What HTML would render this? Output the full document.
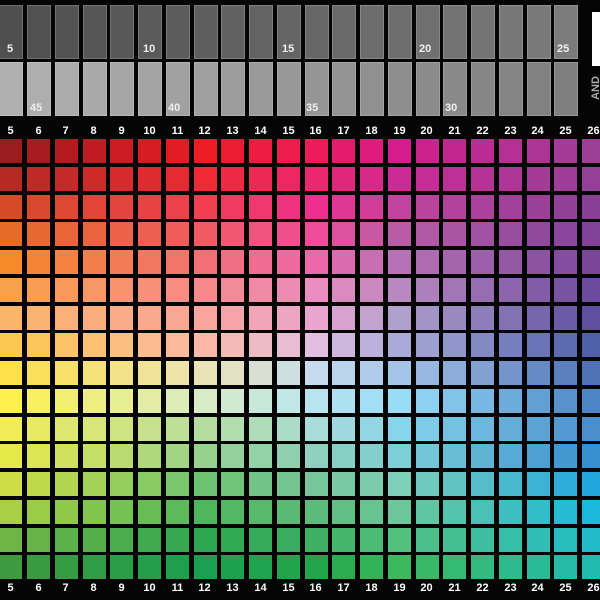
<!DOCTYPE html>
<html><head><meta charset="utf-8"><style>
body{margin:0;width:600px;height:600px;background:#050505;position:relative;overflow:hidden;font-family:"Liberation Sans",sans-serif}
.c{position:absolute;width:23px;height:24px}
.g{position:absolute;width:22px;height:52px;border:1px solid rgba(255,255,255,.18)}
.n{position:absolute;width:23px;text-align:center;color:#fff;font-weight:bold;font-size:11px;line-height:12px}
.gl{position:absolute;color:#eee;font-weight:bold;font-size:11px;line-height:12px}
</style></head><body>
<div id="grid"></div>
<div style="position:absolute;left:592px;top:12px;width:8px;height:54px;background:#fff"></div>
<div style="position:absolute;left:584px;top:82px;transform:rotate(-90deg);color:#aaa;font-weight:bold;font-size:11px">AND</div>

<div class="gl" style="left:7px;top:43px">5</div>
<div class="gl" style="left:143px;top:43px">10</div>
<div class="gl" style="left:282px;top:43px">15</div>
<div class="gl" style="left:419px;top:43px">20</div>
<div class="gl" style="left:557px;top:43px">25</div>
<div class="gl" style="left:30px;top:102px">45</div>
<div class="gl" style="left:168px;top:102px">40</div>
<div class="gl" style="left:306px;top:102px">35</div>
<div class="gl" style="left:445px;top:102px">30</div>

<div id="nt">
<div class="n" style="left:-1px;top:125px">5</div><div class="n" style="left:27px;top:125px">6</div><div class="n" style="left:54px;top:125px">7</div><div class="n" style="left:82px;top:125px">8</div><div class="n" style="left:110px;top:125px">9</div><div class="n" style="left:138px;top:125px">10</div><div class="n" style="left:166px;top:125px">11</div><div class="n" style="left:193px;top:125px">12</div><div class="n" style="left:221px;top:125px">13</div><div class="n" style="left:249px;top:125px">14</div><div class="n" style="left:277px;top:125px">15</div><div class="n" style="left:304px;top:125px">16</div><div class="n" style="left:332px;top:125px">17</div><div class="n" style="left:360px;top:125px">18</div><div class="n" style="left:388px;top:125px">19</div><div class="n" style="left:415px;top:125px">20</div><div class="n" style="left:443px;top:125px">21</div><div class="n" style="left:471px;top:125px">22</div><div class="n" style="left:499px;top:125px">23</div><div class="n" style="left:526px;top:125px">24</div><div class="n" style="left:554px;top:125px">25</div><div class="n" style="left:582px;top:125px">26</div>
<div class="n" style="left:-1px;top:582px">5</div><div class="n" style="left:27px;top:582px">6</div><div class="n" style="left:54px;top:582px">7</div><div class="n" style="left:82px;top:582px">8</div><div class="n" style="left:110px;top:582px">9</div><div class="n" style="left:138px;top:582px">10</div><div class="n" style="left:166px;top:582px">11</div><div class="n" style="left:193px;top:582px">12</div><div class="n" style="left:221px;top:582px">13</div><div class="n" style="left:249px;top:582px">14</div><div class="n" style="left:277px;top:582px">15</div><div class="n" style="left:304px;top:582px">16</div><div class="n" style="left:332px;top:582px">17</div><div class="n" style="left:360px;top:582px">18</div><div class="n" style="left:388px;top:582px">19</div><div class="n" style="left:415px;top:582px">20</div><div class="n" style="left:443px;top:582px">21</div><div class="n" style="left:471px;top:582px">22</div><div class="n" style="left:499px;top:582px">23</div><div class="n" style="left:526px;top:582px">24</div><div class="n" style="left:554px;top:582px">25</div><div class="n" style="left:582px;top:582px">26</div>
</div>
<script>
var P=[0,7,11,14,21];
var K={0:["#9b1b1f","#ee1c25","#ec1c5a","#d51c8c","#9b3f97"],
1:["#b52a25","#ee2a35","#ec2670","#cc2a94","#963f97"],
2:["#d64a27","#ef3f50","#ef2f8f","#c2449e","#8a3f96"],
3:["#e66a28","#f05a62","#ef4d9b","#b85ca6","#82429a"],
4:["#f6892a","#f27076","#ed68ab","#b672b4","#7a469a"],
5:["#f9a04a","#f58a8a","#ea8cc0","#b888c0","#6c4a9d"],
6:["#fbb56a","#f9a49c","#e9a5cf","#b0a0cc","#5f4fa0"],
7:["#fcc84f","#fbb8a8","#dfbedf","#aaaad8","#4f5fa8"],
8:["#fde04a","#ebe3b8","#c6dcee","#a4c4e8","#4f72b5"],
9:["#fdf04f","#d8ecc8","#b8e4ef","#98dcf6","#4d86c6"],
10:["#f0ec5a","#b5dda0","#a8dcd8","#88d4ea","#4a8ecc"],
11:["#e7e84a","#97d18e","#8ed0bd","#7ccfd6","#3a8fd0"],
12:["#cedd45","#6cc270","#78c69c","#7dcfb8","#22a6e0"],
13:["#a8cf45","#4fb75b","#5cbb7a","#6cc79a","#1ab9dc"],
14:["#6fb545","#2ea651","#3eb062","#52c07e","#22bcc8"],
15:["#3e9a3e","#1aa050","#22a64c","#3cb95c","#22bbb0"]};
function h(s){return [1,3,5].map(function(i){return parseInt(s.substr(i,2),16)})}
function mix(a,b,t){return a.map(function(v,i){return v+(b[i]-v)*t})}
var out="";
for(var r=0;r<16;r++){var k=K[r].map(h);
for(var c=0;c<22;c++){var s=0;while(s<3&&c>=P[s+1])s++;var t=(c-P[s])/(P[s+1]-P[s]),col=mix(k[s],k[s+1],t);
out+='<div class="c" style="left:'+(-0.75+27.75*c).toFixed(1)+'px;top:'+(139+27.75*r).toFixed(1)+'px;background:rgb('+col.map(Math.round).join(",")+')"></div>';}}
for(var c=0;c<21;c++){var x=(-0.75+27.75*c).toFixed(1),t=c/20;
var g1=Math.round(79+(123-79)*t),g2=Math.round(176+(127-176)*t);
out+='<div class="g" style="left:'+x+'px;top:5px;background:rgb('+g1+','+g1+','+g1+')"></div>';
out+='<div class="g" style="left:'+x+'px;top:62px;background:rgb('+g2+','+g2+','+g2+')"></div>';}
document.getElementById("grid").innerHTML=out;
</script>
</body></html>
